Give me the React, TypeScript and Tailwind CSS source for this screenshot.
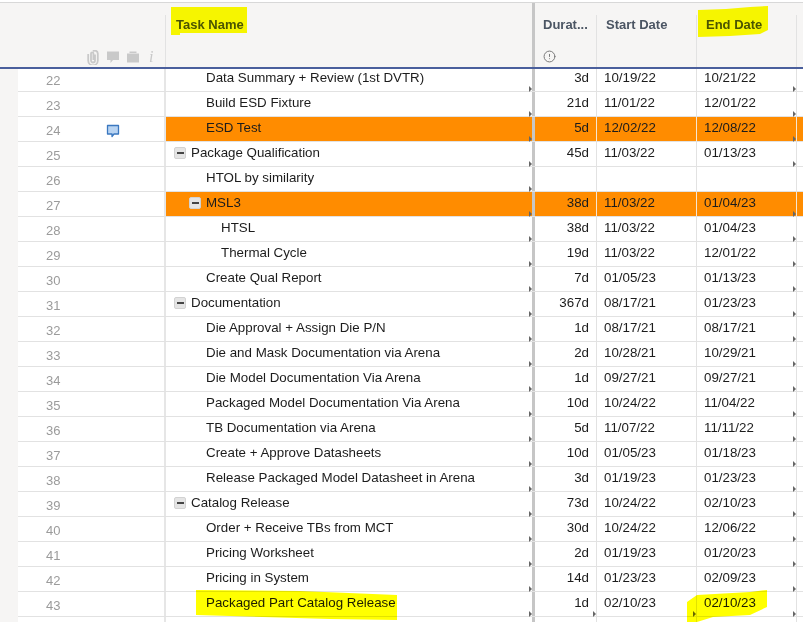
import React from 'react';
import { AlertCircle } from 'lucide-react';

type Row = {
  id: number;
  name: string;
  level: number;
  parent?: boolean;
  dur: string;
  start: string;
  end: string;
  orange?: boolean;
};

const rows: Row[] = [
  { id: 22, name: 'Data Summary + Review (1st DVTR)', level: 1, dur: '3d', start: '10/19/22', end: '10/21/22' },
  { id: 23, name: 'Build ESD Fixture', level: 1, dur: '21d', start: '11/01/22', end: '12/01/22' },
  { id: 24, name: 'ESD Test', level: 1, dur: '5d', start: '12/02/22', end: '12/08/22', orange: true },
  { id: 25, name: 'Package Qualification', level: 0, parent: true, dur: '45d', start: '11/03/22', end: '01/13/23' },
  { id: 26, name: 'HTOL by similarity', level: 1, dur: '', start: '', end: '' },
  { id: 27, name: 'MSL3', level: 1, parent: true, dur: '38d', start: '11/03/22', end: '01/04/23', orange: true },
  { id: 28, name: 'HTSL', level: 2, dur: '38d', start: '11/03/22', end: '01/04/23' },
  { id: 29, name: 'Thermal Cycle', level: 2, dur: '19d', start: '11/03/22', end: '12/01/22' },
  { id: 30, name: 'Create Qual Report', level: 1, dur: '7d', start: '01/05/23', end: '01/13/23' },
  { id: 31, name: 'Documentation', level: 0, parent: true, dur: '367d', start: '08/17/21', end: '01/23/23' },
  { id: 32, name: 'Die Approval + Assign Die P/N', level: 1, dur: '1d', start: '08/17/21', end: '08/17/21' },
  { id: 33, name: 'Die and Mask Documentation via Arena', level: 1, dur: '2d', start: '10/28/21', end: '10/29/21' },
  { id: 34, name: 'Die Model Documentation Via Arena', level: 1, dur: '1d', start: '09/27/21', end: '09/27/21' },
  { id: 35, name: 'Packaged Model Documentation Via Arena', level: 1, dur: '10d', start: '10/24/22', end: '11/04/22' },
  { id: 36, name: 'TB Documentation via Arena', level: 1, dur: '5d', start: '11/07/22', end: '11/11/22' },
  { id: 37, name: 'Create + Approve Datasheets', level: 1, dur: '10d', start: '01/05/23', end: '01/18/23' },
  { id: 38, name: 'Release Packaged Model Datasheet in Arena', level: 1, dur: '3d', start: '01/19/23', end: '01/23/23' },
  { id: 39, name: 'Catalog Release', level: 0, parent: true, dur: '73d', start: '10/24/22', end: '02/10/23' },
  { id: 40, name: 'Order + Receive TBs from MCT', level: 1, dur: '30d', start: '10/24/22', end: '12/06/22' },
  { id: 41, name: 'Pricing Worksheet', level: 1, dur: '2d', start: '01/19/23', end: '01/20/23' },
  { id: 42, name: 'Pricing in System', level: 1, dur: '14d', start: '01/23/23', end: '02/09/23' },
  { id: 43, name: 'Packaged Part Catalog Release', level: 1, dur: '1d', start: '02/10/23', end: '02/10/23' },
];

const Marker = () => (
  <span className="absolute right-0 bottom-[-1px] w-0 h-0 border-y-[3px] border-y-transparent border-l-[3px] border-l-[#666]" />
);

const Collapse = () => (
  <span className="flex items-center justify-center w-[12px] h-[12px] mr-[5px] bg-[#e4e4e4] border border-[#d2d2d2] rounded-[2px] shrink-0">
    <span className="w-[7px] h-[2px] bg-[#444]" />
  </span>
);

function App() {
  return (
    <div className="relative w-[803px] h-[622px] overflow-hidden bg-[#f6f5f4] font-['Liberation_Sans',Arial,sans-serif] text-[13.33px] text-[#1c1c1c]">
      <div className="h-[3px] bg-white border-b border-[#d8d8d8]" />

      {/* header */}
      <div className="relative z-10 flex h-[66px] bg-[#f6f5f4] border-b-2 border-[#4a5f9c] text-[#4b5563] font-bold text-[13px]">
        <div className="relative w-[165px] shrink-0">
          <div className="absolute left-[87px] top-[46px] flex items-center text-[#c9c9c9]">
            <svg width="12" height="15" viewBox="0 0 12 15" className="mr-[8px]">
              <path d="M8 4.5v6a2 2 0 0 1-4 0V3.5a1.2 1.2 0 0 1 2.4 0V10" fill="none" stroke="currentColor" strokeWidth="1.8" />
              <path d="M1.2 4v6.5a4.8 4.8 0 0 0 9.6 0V3.5A3 3 0 0 0 6 1.2" fill="none" stroke="currentColor" strokeWidth="1.8" />
            </svg>
            <svg width="12" height="12" viewBox="0 0 12 12" className="mr-[8px]">
              <path d="M0 0.5h12v8.5H6l-2.5 3V9H0z" fill="currentColor" />
            </svg>
            <svg width="12" height="12" viewBox="0 0 12 12" className="mr-[10px]">
              <path d="M2.5 0.5h7V2h-7zM0 2.5h12v9H0z" fill="currentColor" />
            </svg>
            <span className="font-['Liberation_Serif',serif] italic text-[16px] leading-none font-normal">i</span>
          </div>
        </div>
        <div className="w-[367px] shrink-0 mt-[12px] border-l border-[#e2e2e2] pl-[10px]">Task Name</div>
        <div className="w-[3px] shrink-0 bg-[#c6c6c6]" />
        <div className="relative w-[62px] shrink-0 mt-[12px] border-r border-[#e2e2e2] pl-[8px]">
          Durat...
          <AlertCircle size={13} strokeWidth={1.8} className="absolute left-[8px] top-[35px] text-[#777]" />
        </div>
        <div className="w-[100px] shrink-0 mt-[12px] border-r border-[#e2e2e2] pl-[9px]">Start Date</div>
        <div className="w-[100px] shrink-0 mt-[12px] border-r border-[#e2e2e2] pl-[9px]">End Date</div>
      </div>

      {/* rows */}
      <div className="mt-[-2px] ml-[18px]">
        {rows.map((r) => (
          <div key={r.id} className="flex h-[25px] border-b border-[#e2e2e2] bg-white">
            <div className="relative w-[148px] shrink-0 border-r-2 border-[#e6e6e6]">
              <span className="absolute left-[28px] top-[4px] text-[13px] text-[#9b9b9b] leading-[20px]">{r.id}</span>
              {r.id === 24 && (
                <svg width="14" height="14" viewBox="0 0 14 14" className="absolute left-[88px] top-[7px]">
                  <path d="M1.5 1.5h11v8.5H8l-2 2.5V10H1.5z" fill="#b9d4f2" stroke="#3b78c0" strokeWidth="1.3" strokeLinejoin="round" />
                </svg>
              )}
            </div>
            <div
              className={`relative flex items-center w-[366px] shrink-0 pb-[3px] ${r.orange ? 'bg-[#ff8c00]' : ''}`}
              style={{ paddingLeft: r.level === 0 ? 8 : r.parent ? 23 : r.level === 1 ? 40 : 55 }}
            >
              {r.parent && <Collapse />}
              <span className="whitespace-nowrap">{r.name}</span>
              <Marker />
            </div>
            <div className="w-[3px] shrink-0 bg-[#c6c6c6]" />
            <div className={`relative flex items-center justify-end w-[62px] shrink-0 pr-[7px] pb-[3px] border-r ${r.orange ? 'bg-[#ff8c00] border-[#f5e6d3]' : 'border-[#e2e2e2]'}`}>
              {r.dur}
              {r.id === 43 && <Marker />}
            </div>
            <div className={`relative flex items-center w-[100px] shrink-0 pl-[7px] pb-[3px] border-r ${r.orange ? 'bg-[#ff8c00] border-[#f5e6d3]' : 'border-[#e2e2e2]'}`}>
              {r.start}
              {r.id === 43 && <Marker />}
            </div>
            <div className={`relative flex items-center w-[100px] shrink-0 pl-[7px] pb-[3px] border-r ${r.orange ? 'bg-[#ff8c00] border-[#f5e6d3]' : 'border-[#e2e2e2]'}`}>
              {r.end}
              {r.end && <Marker />}
            </div>
            <div className={`flex-1 ${r.orange ? 'bg-[#ff8c00]' : ''}`} />
          </div>
        ))}
        {/* empty row under the last task */}
        <div className="flex h-[25px] bg-white">
          <div className="w-[148px] shrink-0 border-r-2 border-[#e6e6e6]" />
          <div className="w-[366px] shrink-0" />
          <div className="w-[3px] shrink-0 bg-[#c6c6c6]" />
          <div className="w-[62px] shrink-0 border-r border-[#e2e2e2]" />
          <div className="w-[100px] shrink-0 border-r border-[#e2e2e2]" />
          <div className="w-[100px] shrink-0 border-r border-[#e2e2e2]" />
        </div>
      </div>

      {/* marker pen highlights */}
      <svg width="803" height="622" viewBox="0 0 803 622" className="absolute left-0 top-0 z-20 mix-blend-multiply pointer-events-none">
        <path d="M171 7h76v26h-67v2h-9z" fill="#ffff00" />
        <path d="M698 10l28-1 24-2 18-1v24l-8 4-30 2-32 1z" fill="#ffff00" />
        <path d="M196 590l104 1 97 4v25l-67-1-134-4z" fill="#ffff00" />
        <path d="M687 602l10-7 53-3 17-2v17l-17 8-37 2-16 5h-10z" fill="#ffff00" />
      </svg>
    </div>
  );
}

export default App;
